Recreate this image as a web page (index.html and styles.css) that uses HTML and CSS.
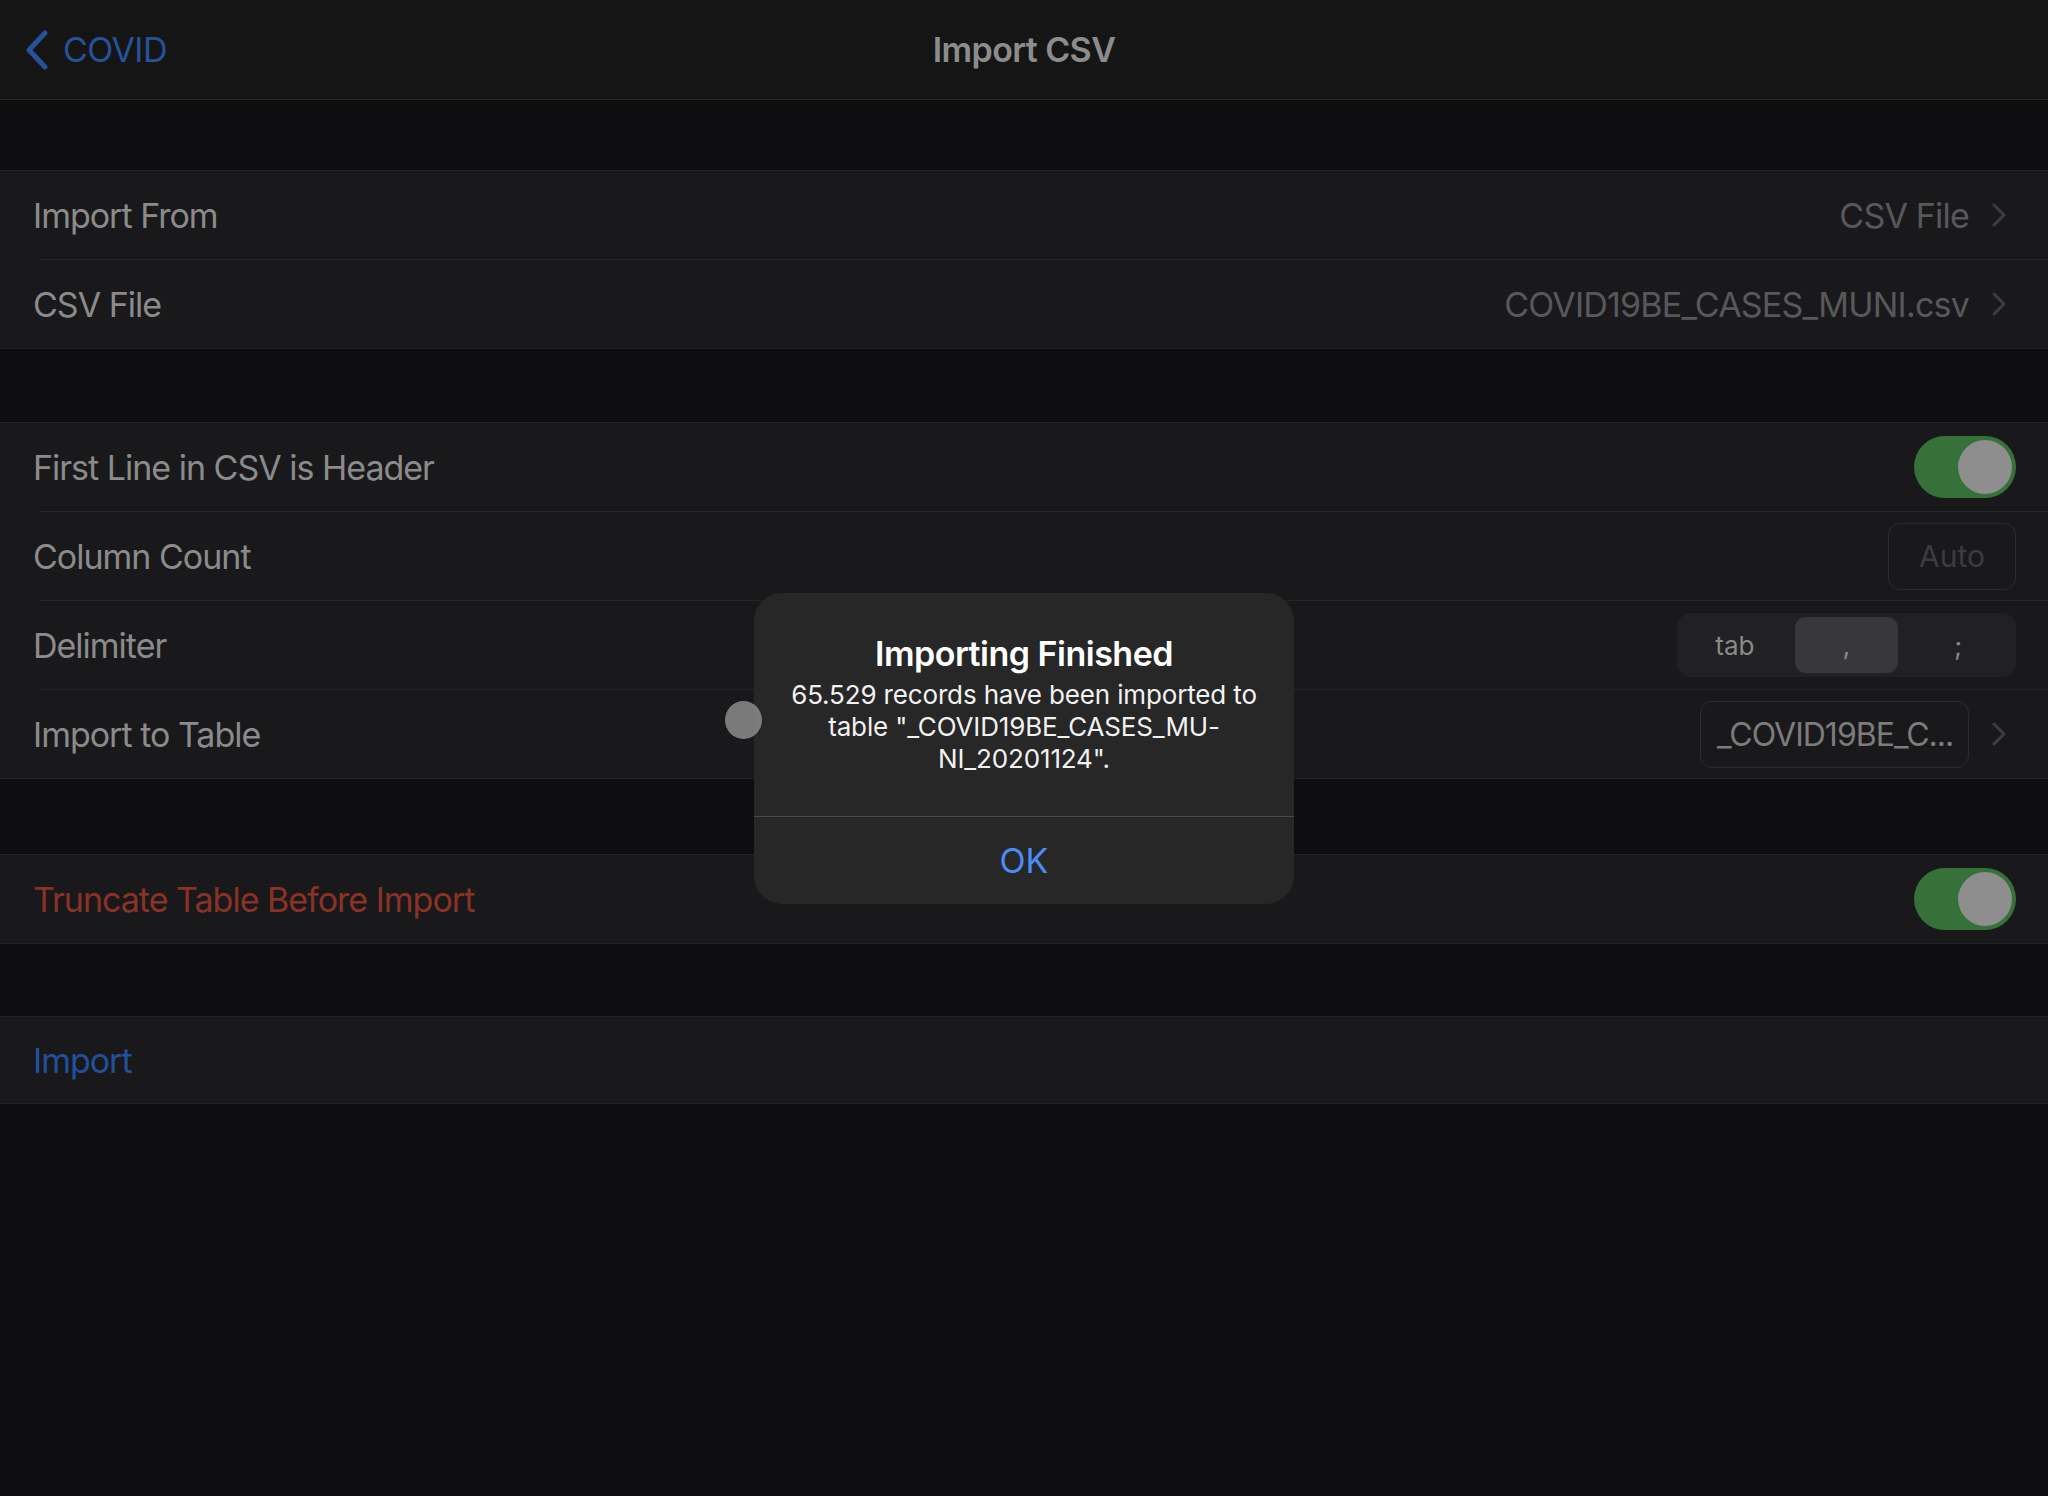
FILE: index.html
```html
<!DOCTYPE html>
<html lang="en">
<head>
    <meta charset="UTF-8">
    <meta name="viewport" content="width=device-width, initial-scale=1.0">
    <title>Import CSV</title>
    <link rel="stylesheet" href="styles.css">
</head>
<body>
    <header class="nav-bar">
        <a href="#" class="back-btn">
            <svg class="back-icon" width="24" height="40" viewBox="0 0 24 40">
                <path d="M21 3 L5 20 L21 37" fill="none" stroke="currentColor" stroke-width="5" stroke-linecap="round" stroke-linejoin="round"/>
            </svg>
            <span>COVID</span>
        </a>
        <h1 class="nav-title">Import CSV</h1>
        <div></div>
    </header>

    <main class="form">
        <section class="group group-source">
            <div class="row">
                <span class="label">Import From</span>
                <span class="detail">CSV File</span>
                <svg class="chevron" width="14" height="24" viewBox="0 0 14 24"><path d="M2 2 L12 12 L2 22" fill="none" stroke="currentColor" stroke-width="3" stroke-linecap="round" stroke-linejoin="round"/></svg>
            </div>
            <div class="row">
                <span class="label">CSV File</span>
                <span class="detail">COVID19BE_CASES_MUNI.csv</span>
                <svg class="chevron" width="14" height="24" viewBox="0 0 14 24"><path d="M2 2 L12 12 L2 22" fill="none" stroke="currentColor" stroke-width="3" stroke-linecap="round" stroke-linejoin="round"/></svg>
            </div>
        </section>

        <section class="group group-options">
            <div class="row">
                <span class="label">First Line in CSV is Header</span>
                <div class="toggle on"><div class="knob"></div></div>
            </div>
            <div class="row">
                <span class="label">Column Count</span>
                <div class="text-field auto-field">Auto</div>
            </div>
            <div class="row">
                <span class="label">Delimiter</span>
                <div class="segmented">
                    <div class="segment">tab</div>
                    <div class="segment selected">,</div>
                    <div class="segment">;</div>
                </div>
            </div>
            <div class="row">
                <span class="label">Import to Table</span>
                <div class="text-field table-field">_COVID19BE_C...</div>
                <svg class="chevron" width="14" height="24" viewBox="0 0 14 24"><path d="M2 2 L12 12 L2 22" fill="none" stroke="currentColor" stroke-width="3" stroke-linecap="round" stroke-linejoin="round"/></svg>
            </div>
        </section>

        <section class="group group-truncate">
            <div class="row">
                <span class="label danger">Truncate Table Before Import</span>
                <div class="toggle on"><div class="knob"></div></div>
            </div>
        </section>

        <section class="group group-action">
            <div class="row">
                <span class="label action">Import</span>
            </div>
        </section>
    </main>

    <div class="alert">
        <div class="alert-body">
            <h2 class="alert-title">Importing Finished</h2>
            <p class="alert-message">65.529 records have been imported to<br>table "_COVID19BE_CASES_MU-<br>NI_20201124".</p>
        </div>
        <button class="alert-btn">OK</button>
    </div>

    <div class="touch-dot"></div>
</body>
</html>
```

FILE: styles.css
```css
* {
    margin: 0;
    padding: 0;
    box-sizing: border-box;
}

body {
    width: 2048px;
    height: 1496px;
    overflow: hidden;
    position: relative;
    background-color: #0e0e10;
    font-family: 'Inter', 'Liberation Sans', sans-serif;
    font-size: 34px;
    letter-spacing: -1px;
    color: #8b8b8b;
}

.nav-bar {
    height: 100px;
    background: #151515;
    border-bottom: 1px solid #272727;
    display: grid;
    grid-template-columns: 1fr auto 1fr;
    align-items: center;
}

.back-btn {
    display: flex;
    align-items: center;
    gap: 15px;
    padding-left: 24px;
    color: #25529a;
    text-decoration: none;
    font-size: 34px;
    letter-spacing: -0.6px;
}

.back-icon {
    display: block;
}

.nav-title {
    font-size: 34px;
    font-weight: 600;
    letter-spacing: -0.6px;
    color: #8c8c8c;
}

.form {
    display: flex;
    flex-direction: column;
}

.group {
    background: #19191b;
    border-top: 1px solid #232325;
    border-bottom: 1px solid #232325;
}

.group-source { margin-top: 70px; }
.group-options { margin-top: 73px; }
.group-truncate { margin-top: 75px; }
.group-action { margin-top: 72px; }

.row {
    position: relative;
    height: 88px;
    display: flex;
    align-items: center;
    padding: 0 32px 0 33px;
}

.group-action .row {
    height: 86px;
}

.row + .row {
    margin-top: 1px;
}

.row + .row::before {
    content: "";
    position: absolute;
    top: -1px;
    left: 40px;
    right: 0;
    height: 1px;
    background: #262628;
}

.label {
    flex: 1;
}

.label.danger {
    color: #8a3226;
}

.label.action {
    color: #22509a;
}

.detail {
    color: #58585b;
    letter-spacing: -0.8px;
}

.chevron {
    color: #3d3d40;
    margin-left: 23px;
    margin-right: 10px;
    display: block;
}

.toggle {
    width: 102px;
    height: 62px;
    border-radius: 31px;
    background: #37713a;
    padding: 4px;
    display: flex;
    justify-content: flex-end;
}

.knob {
    width: 54px;
    height: 54px;
    border-radius: 50%;
    background: #8e8e8e;
}

.text-field {
    border: 1px solid #2c2c2e;
    border-radius: 12px;
    height: 67px;
    display: flex;
    align-items: center;
}

.auto-field {
    width: 128px;
    justify-content: center;
    font-size: 30px;
    letter-spacing: 0;
    color: #3c3c3e;
}

.table-field {
    width: 269px;
    padding-left: 16px;
    font-size: 32px;
    letter-spacing: -1px;
    color: #7c7c7c;
}

.segmented {
    width: 339px;
    height: 64px;
    padding: 4px 6px;
    gap: 8px;
    border-radius: 14px;
    background: #212123;
    display: flex;
}

.segment {
    flex: 1;
    display: flex;
    align-items: center;
    justify-content: center;
    font-size: 26px;
    letter-spacing: 0;
    color: #8a8a8a;
    border-radius: 11px;
}

.segment.selected {
    background: #38383b;
}

.alert {
    position: absolute;
    left: 754px;
    top: 593px;
    width: 540px;
    background: #272727;
    border-radius: 28px;
    overflow: hidden;
    text-align: center;
}

.alert-body {
    padding: 40px 30px 41px;
}

.alert-title {
    font-size: 34px;
    line-height: 42px;
    font-weight: 600;
    letter-spacing: -0.5px;
    color: #ffffff;
}

.alert-message {
    margin-top: 4px;
    font-size: 26px;
    line-height: 32px;
    letter-spacing: -0.15px;
    color: #f2f2f2;
}

.alert-btn {
    display: block;
    width: 100%;
    height: 88px;
    border: none;
    border-top: 1px solid #4a4a4c;
    background: transparent;
    font-family: inherit;
    font-size: 34px;
    letter-spacing: 0;
    color: #4b8cf5;
}

.touch-dot {
    position: absolute;
    left: 725px;
    top: 701px;
    width: 37px;
    height: 38px;
    border-radius: 50%;
    background: rgba(140, 140, 140, 0.85);
}
```
